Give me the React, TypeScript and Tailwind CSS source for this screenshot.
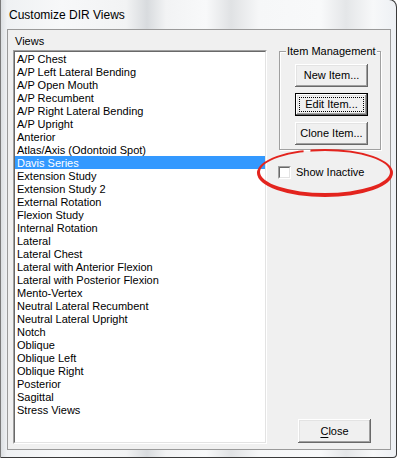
const items = [
  "A/P Chest",
  "A/P Left Lateral Bending",
  "A/P Open Mouth",
  "A/P Recumbent",
  "A/P Right Lateral Bending",
  "A/P Upright",
  "Anterior",
  "Atlas/Axis (Odontoid Spot)",
  "Davis Series",
  "Extension Study",
  "Extension Study 2",
  "External Rotation",
  "Flexion Study",
  "Internal Rotation",
  "Lateral",
  "Lateral Chest",
  "Lateral with Anterior Flexion",
  "Lateral with Posterior Flexion",
  "Mento-Vertex",
  "Neutral Lateral Recumbent",
  "Neutral Lateral Upright",
  "Notch",
  "Oblique",
  "Oblique Left",
  "Oblique Right",
  "Posterior",
  "Sagittal",
  "Stress Views",
];

const bevel =
  "shadow-[inset_-1px_-1px_0_#696969,inset_1px_1px_0_#ffffff,inset_-2px_-2px_0_#a0a0a0,inset_2px_2px_0_#e3e3e3]";

function Btn({ label }: { label: string }) {
  return (
    <div className={`w-[73px] h-[23px] bg-[#f0f0f0] flex items-center justify-center text-[11px] leading-[13px] text-black ${bevel}`}>
      {label}
    </div>
  );
}

export default function App() {
  return (
    <div className="relative w-[398px] h-[459px] overflow-hidden bg-white font-['Liberation_Sans',Arial,sans-serif] text-black">
      <div className="mt-[-1px] w-[397px] h-[459px] flex flex-col border border-[#3a3a3a] border-l-[#7a7a7a] rounded-tr-[8px] rounded-br-[4px] bg-[linear-gradient(90deg,#dcdfe2_0px,#eff1f3_6px,#f7f8f9_60px,#f2f3f4_125px,#d8dbde_146px,#f2f3f4_165px,#f8f9fa_205px,#e0e2e4_230px,#f6f7f8_258px,#f8f9fa_320px,#e4e6e8_345px,#f7f8f9_372px,#edf0f4_396px)] pl-[6px] pr-[5px] pb-[7px]">
        <div className="h-[29px] shrink-0 pl-[2px] pt-[8px] text-[12px] leading-[15px] text-black">
          Customize DIR Views
        </div>
        <div className="flex-1 flex border border-[#9a9a9a] bg-[#f0f0f0] pl-[5px] pt-[5px] pb-[5px] text-[11px] leading-[13px]">
          <div className="w-[254px] flex flex-col">
            <div className="h-[15px] pl-[2px] leading-[13px]">Views</div>
            <div className="flex-1 bg-white border border-t-[#a0a0a0] border-l-[#a0a0a0] border-b-white border-r-white">
              <div className="h-full border border-t-[#696969] border-l-[#696969] border-b-[#e3e3e3] border-r-[#e3e3e3]">
                {items.map((it) => (
                  <div
                    key={it}
                    className={`h-[13px] leading-[14px] pl-[2px] whitespace-nowrap ${
                      it === "Davis Series" ? "bg-[#3399ff] text-white" : "text-black"
                    }`}
                  >
                    {it}
                  </div>
                ))}
              </div>
            </div>
          </div>
          <div className="ml-[11px] flex flex-col flex-1 pb-[1px]">
            <div className="relative mt-[16px] ml-[1px] w-[102px] h-[99px] border border-[#a0a0a0] shadow-[inset_1px_1px_0_#ffffff,1px_1px_0_#ffffff] pl-[15px] pt-[12px] flex flex-col gap-[6px]">
              <div className="absolute left-[6px] top-[-7px] px-[1px] bg-[#f0f0f0] leading-[13px] whitespace-nowrap">
                Item Management
              </div>
              <Btn label="New Item..." />
              <div className={`w-[73px] h-[23px] bg-[#f0f0f0] border border-black p-[3px] ${bevel}`}>
                <div className="w-full h-full border border-dotted border-black flex items-center justify-center leading-[13px]">
                  Edit Item...
                </div>
              </div>
              <Btn label="Clone Item..." />
            </div>
            <div className="mt-[16px] flex items-center gap-[5px] h-[13px]">
              <div className="w-[13px] h-[13px] bg-white border border-t-[#a0a0a0] border-l-[#a0a0a0] border-b-white border-r-white">
                <div className="w-full h-full border border-t-[#696969] border-l-[#696969] border-b-[#e3e3e3] border-r-[#e3e3e3]" />
              </div>
              <span className="leading-[13px] whitespace-nowrap">Show Inactive</span>
            </div>
            <div className={`mt-auto ml-[20px] w-[73px] h-[24px] bg-[#f0f0f0] flex items-center justify-center leading-[13px] ${bevel}`}>
              <span>
                <span className="underline underline-offset-[2px]">C</span>lose
              </span>
            </div>
          </div>
        </div>
      </div>
      <svg className="absolute left-0 top-0 pointer-events-none" width="398" height="459" viewBox="0 0 398 459">
        <defs>
          <mask id="gapmask">
            <rect width="398" height="459" fill="white" />
            <polygon points="303,140 311,140 310,160 304,160" fill="black" />
          </mask>
        </defs>
        <path
          fill="#e3241e"
          fillRule="evenodd"
          mask="url(#gapmask)"
          d="M257,173 a68,24 0 1,0 136,0 a68,24 0 1,0 -136,0 Z M260,172 a65,21 0 1,0 130,0 a65,21 0 1,0 -130,0 Z"
        />
      </svg>
    </div>
  );
}
